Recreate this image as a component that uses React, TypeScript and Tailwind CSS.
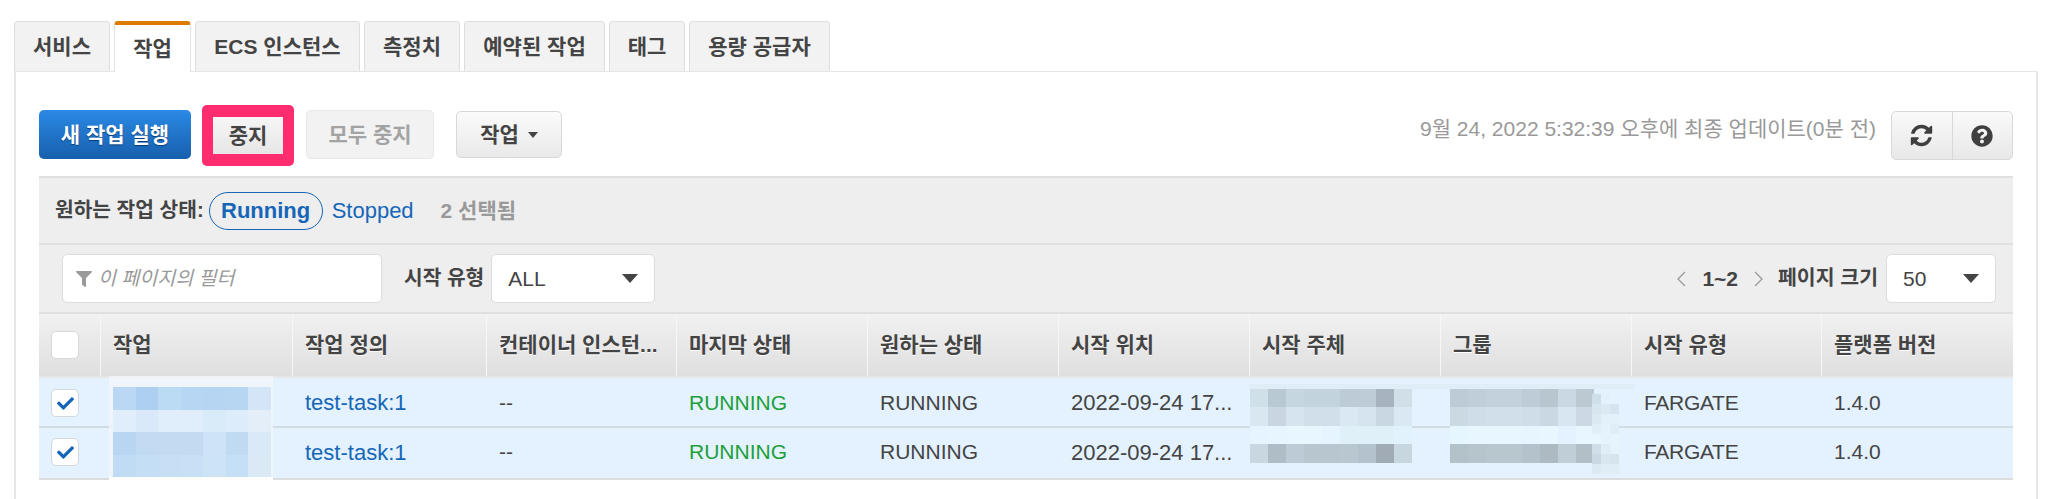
import { FaCheck, FaFilter, FaQuestionCircle } from "react-icons/fa";

const tabs = [
  { label: "서비스", width: "w-[96px]" },
  { label: "작업", width: "w-[77px]", active: true },
  { label: "ECS 인스턴스", width: "w-[165px]" },
  { label: "측정치", width: "w-[96px]" },
  { label: "예약된 작업", width: "w-[141px]" },
  { label: "태그", width: "w-[76px]" },
  { label: "용량 공급자", width: "w-[141px]" },
];

const columns = [
  "작업",
  "작업 정의",
  "컨테이너 인스턴...",
  "마지막 상태",
  "원하는 상태",
  "시작 위치",
  "시작 주체",
  "그룹",
  "시작 유형",
  "플랫폼 버전",
];

const gridCols = "grid-cols-[62px_192px_194px_190px_191px_191px_191px_191px_191px_190px_191px]";

const blurTask = [
  ["#bad8f3", "#aed0f0", "#bbdaf4", "#b7d6f3", "#b5d5f2", "#b6d6f2", "#d3e5f6"],
  ["#e0eefb", "#d9e9f9", "#e0eefb", "#dfeefa", "#d9ebf8", "#dcecfa", "#e3eef8"],
  ["#b8d6f1", "#c2dbf2", "#c3daf1", "#c3daf1", "#cee3f7", "#bfdaf1", "#d9e9f7"],
  ["#c0dbf4", "#c4def5", "#c6dff5", "#c8e0f5", "#cde3f6", "#c5dff6", "#dae9f5"],
];

const blurOwner = [
  ["#d0e0e8", "#b9c9d3", "#c6d6e1", "#c3d3dd", "#c3d3dd", "#bccbd6", "#bdccd7", "#a7b4bf", "#d0dfe8"],
  ["#d8e7f0", "#c9d6e2", "#d5e4ee", "#d0dfe9", "#d0dfe9", "#d9e8f3", "#d5e4ee", "#c9d7e3", "#d9e8f2"],
  ["#e5f4fe", "#e6f5ff", "#e7f6ff", "#e8f6ff", "#e5f4fe", "#e0f0f8", "#e0f0f9", "#e0f0f9", "#e2f2fc"],
  ["#c8d7e0", "#aebdc6", "#bccbd6", "#b8c7cf", "#b8c7cf", "#b9c8d0", "#b3c2cc", "#a0abb5", "#c8d7df"],
];

const blurGroup = [
  ["#bccbd5", "#bfced8", "#c2d1db", "#c2d1db", "#bdccd6", "#b8c6d0", "#c9d8e3", "#bcc9d3"],
  ["#cbd9e3", "#cfdde8", "#d1dfea", "#d1dfea", "#cedde7", "#cad8e3", "#d7e6f1", "#ccd9e4"],
  ["#e6f6ff", "#e7f6ff", "#e7f6ff", "#e7f6ff", "#e6f5ff", "#e8f7ff", "#e3f2fe", "#e8f7ff"],
  ["#b3c1c9", "#b6c4cc", "#b8c6ce", "#b8c6ce", "#b4c2cb", "#adbac1", "#c0ced8", "#b2bfc7"],
];

const blurGroupTail = [
  ["#cfdfea", "#e3f1fc", "#e5f3fe"],
  ["#d7e5ef", "#dbe9f3", "#d5e4ee"],
  ["#dbe9f3", "#e3f1fb", "#e3f1fb"],
  ["#e0eef8", "#e5f3fd", "#dfedf7"],
  ["#e8f6ff", "#e5f3fd", "#e6f4fe"],
  ["#cfdee8", "#dfedf7", "#e5f3fd"],
  ["#c9d8e2", "#d9e7f1", "#d6e4ee"],
  ["#dbe9f3", "#e0eef8", "#dfedf7"],
];

function Mosaic({ cells, cellClass, gridClass }: { cells: string[][]; cellClass: string; gridClass: string }) {
  return (
    <div className={`grid ${gridClass}`}>
      {cells.flat().map((color, i) => (
        <div key={i} className={cellClass} style={{ backgroundColor: color }} />
      ))}
    </div>
  );
}

function Caret() {
  return <span className="h-0 w-0 border-x-[8px] border-t-[9px] border-x-transparent border-t-[#444]" />;
}

function Select({ value, width }: { value: string; width: string }) {
  return (
    <div className={`flex h-[49px] ${width} items-center justify-between rounded-[5px] border border-[#dcdcdc] bg-white pl-[16px] pr-[16px] text-[21px] text-[#444]`}>
      <span>{value}</span>
      <Caret />
    </div>
  );
}

function RefreshIcon() {
  return (
    <svg width="25" height="25" viewBox="0 0 1792 1792" fill="currentColor">
      <path d="M1639 1056q0 5-1 7-64 268-268 434.5t-478 166.5q-146 0-282.5-55t-243.5-157l-129 129q-19 19-45 19t-45-19-19-45v-448q0-26 19-45t45-19h448q26 0 45 19t19 45-19 45l-137 137q71 66 161 102t187 36q134 0 250-65t186-179q11-17 53-117 8-23 30-23h192q13 0 22.5 9.5t9.5 22.5zm25-800v448q0 26-19 45t-45 19h-448q-26 0-45-19t-19-45 19-45l138-138q-148-137-349-137-134 0-250 65t-186 179q-11 17-53 117-8 23-30 23h-199q-13 0-22.5-9.5t-9.5-22.5v-7q65-268 270-434.5t480-166.5q146 0 284 55.5t245 156.5l130-129q19-19 45-19t45 19 19 45z" />
    </svg>
  );
}

function TaskRow({ last }: { last?: boolean }) {
  const cell = "flex items-center px-[12px] text-[21px]";
  return (
    <div className={`grid ${gridCols} bg-[#e3f2fe] text-[#444] ${last ? "h-[52px] border-b-2 border-[#dcdcdc] pb-[2px]" : "h-[50px] border-b-2 border-[#d3dce3] pt-[1px]"}`}>
      <div className="flex items-center justify-start pl-[12px]">
        <span className="flex h-[28px] w-[28px] items-center justify-center rounded-[5px] border border-[#d2d8de] bg-white">
          <FaCheck className="mt-[1px] text-[17px] text-[#1666b8]" />
        </span>
      </div>
      <div className={cell} />
      <div className={`${cell} text-[22px] text-[#1666b8]`}>test-task:1</div>
      <div className={cell}>--</div>
      <div className={`${cell} text-[#1d9f3a]`}>RUNNING</div>
      <div className={cell}>RUNNING</div>
      <div className={`${cell} text-[22px]`}>2022-09-24 17...</div>
      <div className={cell} />
      <div className={cell} />
      <div className={`${cell} tracking-[-0.3px]`}>FARGATE</div>
      <div className={cell}>1.4.0</div>
    </div>
  );
}

export default function App() {
  return (
    <div className="h-[499px] w-[2048px] overflow-hidden bg-white pl-[14px] pr-[10px] pt-[21px] font-['Liberation_Sans','Noto_Sans_CJK_KR',sans-serif] text-[#444]">
      <div className="flex gap-[4px]">
        {tabs.map((tab) => (
          <div
            key={tab.label}
            className={`flex h-[50px] ${tab.width} items-center justify-center rounded-t-[4px] border border-b-0 text-[21px] font-semibold ${
              tab.active
                ? "relative z-10 -mb-px h-[51px] border-[#e2e2e2] border-t-[4px] border-t-[#dd7a00] bg-white"
                : "border-[#dedede] bg-[#f2f2f2]"
            }`}
          >
            {tab.label}
          </div>
        ))}
      </div>

      <div className="h-[428px] border-l-2 border-r-2 border-t border-[#e6e6e6] pl-[23px] pr-[23px] pt-[33px]">
        <div className="flex h-[71px] items-start">
          <button className="mt-[5px] h-[49px] w-[152px] rounded-[5px] bg-gradient-to-b from-[#2b8ae6] to-[#175fad] text-[21px] font-semibold text-white [text-shadow:0_1px_1px_#0b3a70]">
            새 작업 실행
          </button>
          <div className="ml-[11px] rounded-[5px] bg-[#ff2d6f] p-[12px_11px]">
            <button className="block h-[37px] w-[70px] bg-gradient-to-b from-[#f6f6f6] to-[#e6e6e6] text-[21px] font-semibold text-[#444]">
              중지
            </button>
          </div>
          <button className="ml-[12px] mt-[5px] h-[49px] w-[128px] rounded-[5px] border border-[#e8e8e8] bg-[#f2f2f2] text-[21px] font-semibold text-[#a3a3a3]">
            모두 중지
          </button>
          <button className="ml-[22px] mt-[6px] flex h-[47px] w-[106px] items-center justify-center gap-[9px] rounded-[5px] border border-[#d8d8d8] bg-gradient-to-b from-[#fbfbfb] to-[#e9e9e9] text-[21px] font-semibold text-[#444]">
            작업
            <span className="h-0 w-0 border-x-[5px] border-t-[6px] border-x-transparent border-t-[#444]" />
          </button>
          <div className="ml-auto mt-[11px] text-[21px] leading-[26px] text-[#999]">9월 24, 2022 5:32:39 오후에 최종 업데이트(0분 전)</div>
          <div className="ml-[15px] mt-[6px] flex h-[49px] w-[122px] overflow-hidden rounded-[5px] border border-[#d8d8d8] bg-gradient-to-b from-[#fafafa] to-[#e8e8e8] text-[#3f3f3f]">
            <div className="flex flex-1 items-center justify-center border-r border-[#d8d8d8]">
              <RefreshIcon />
            </div>
            <div className="flex flex-1 items-center justify-center">
              <FaQuestionCircle className="text-[22px]" />
            </div>
          </div>
        </div>

        <div className="flex h-[69px] items-center border-t-2 border-b-2 border-[#e0e0e0] bg-[#eeeeee] pl-[16px] text-[20.3px]">
          <span className="font-semibold text-[#444]">원하는 작업 상태:</span>
          <span className="ml-[5px] flex h-[38px] w-[114px] items-center justify-center rounded-full border border-[#1666b8] text-[22px] font-bold text-[#1666b8]">Running</span>
          <span className="ml-[9px] text-[22px] text-[#1666b8]">Stopped</span>
          <span className="ml-[27px] text-[21px] font-bold text-[#999]">2 선택됨</span>
        </div>

        <div className="flex h-[69px] items-center border-b-2 border-[#e0e0e0] bg-[#eeeeee] pl-[23px] pr-[17px]">
          <div className="flex h-[49px] w-[320px] items-center gap-[6px] rounded-[5px] border border-[#dcdcdc] bg-white pl-[13px] text-[19.5px] italic text-[#999]">
            <FaFilter className="text-[16px] text-[#9a9a9a]" />
            이 페이지의 필터
          </div>
          <span className="ml-[22px] mr-[7px] text-[20.3px] font-semibold text-[#444]">시작 유형</span>
          <Select value="ALL" width="w-[164px]" />
          <span className="ml-auto text-[#999]">
            <svg width="10" height="18" viewBox="0 0 10 18" fill="none" stroke="currentColor" strokeWidth="1.3">
              <path d="M9 2 2 9l7 7" />
            </svg>
          </span>
          <span className="ml-[16px] text-[21px] font-bold text-[#444]">1~2</span>
          <span className="ml-[16px] text-[#999]">
            <svg width="10" height="18" viewBox="0 0 10 18" fill="none" stroke="currentColor" strokeWidth="1.3">
              <path d="m1 2 7 7-7 7" />
            </svg>
          </span>
          <span className="ml-[14px] mr-[8px] text-[20.5px] font-semibold text-[#444]">페이지 크기</span>
          <Select value="50" width="w-[110px]" />
        </div>

        <div className="relative">
          <div className={`grid ${gridCols} h-[64px] border-b-2 border-[#e6e6e6] bg-gradient-to-b from-[#f1f1f1] to-[#dfdfdf]`}>
            <div className="flex items-center justify-start border-r border-[#f7f7f7] pl-[12px]">
              <span className="h-[28px] w-[28px] rounded-[5px] border border-[#d8d8d8] bg-white" />
            </div>
            {columns.map((c) => (
              <div key={c} className="flex items-center whitespace-nowrap border-r border-[#f7f7f7] pl-[12px] text-[21px] font-semibold text-[#444] [text-shadow:0_1px_0_#fff] last:border-r-0">
                {c}
              </div>
            ))}
          </div>
          <TaskRow />
          <TaskRow last />

          {/* pixelated blur over the task id and the started-by / group values */}
          <div className="absolute left-[70px] top-[62px] h-[105px] w-[164px] bg-[#f3f6f8]/70">
            <div className="absolute bottom-0 h-[4px] w-full bg-white/90" />
            <div className="absolute left-[4px] top-[11px]">
              <Mosaic cells={blurTask} gridClass="grid-cols-7" cellClass="h-[22.5px] w-[22.5px]" />
            </div>
          </div>
          <div className="absolute left-[1211px] top-[70px] h-[5px] w-[385px] bg-[#dfedf7]" />
          <div className="absolute left-[1211px] top-[75px]">
            <Mosaic cells={blurOwner} gridClass="grid-cols-9" cellClass="h-[18.4px] w-[18px]" />
          </div>
          <div className="absolute left-[1411px] top-[75px]">
            <Mosaic cells={blurGroup} gridClass="grid-cols-8" cellClass="h-[18.4px] w-[18px]" />
          </div>
          <div className="absolute left-[1553px] top-[80px]">
            <Mosaic cells={blurGroupTail} gridClass="grid-cols-3" cellClass="h-[10px] w-[9px]" />
          </div>
        </div>
      </div>
    </div>
  );
}
